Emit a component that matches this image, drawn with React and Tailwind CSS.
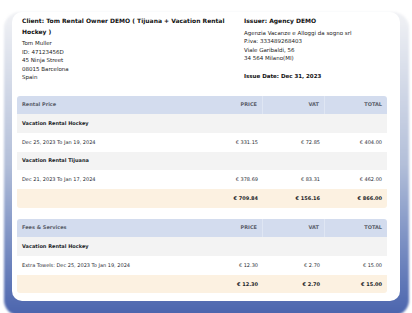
import React from 'react';

const client = ['Tom Muller', 'ID: 47123456D', '45 Ninja Street', '08015 Barcelona', 'Spain'];
const issuer = ['Agenzia Vacanze e Alloggi da sogno srl', 'P.iva: 333489268403', 'Viale Garibaldi, 56', '34 564 Milano(MI)'];

const rental = [
    { group: 'Vacation Rental Hockey', label: 'Dec 25, 2023 To Jan 19, 2024', price: '€ 331.15', vat: '€ 72.85', total: '€ 404.00' },
    { group: 'Vacation Rental Tijuana', label: 'Dec 21, 2023 To Jan 17, 2024', price: '€ 378.69', vat: '€ 83.31', total: '€ 462.00' },
];

const fees = [
    { group: 'Vacation Rental Hockey', label: 'Extra Towels: Dec 25, 2023 To Jan 19, 2024', price: '€ 12.30', vat: '€ 2.70', total: '€ 15.00' },
];

const Section = ({ title, rows, totals }) => (
    <div className="w-[370px] text-[5px] leading-none">
        <div className="grid grid-cols-[184px_62px_62px_62px] h-[18.5px] items-center bg-[#d3dcee] rounded-t-[3px] font-bold text-[#5b5f6b]">
            <div className="pl-[5px]">{title}</div>
            <div className="h-full flex items-center justify-end pr-[5px] border-r border-[#dfe6f3]">PRICE</div>
            <div className="h-full flex items-center justify-end pr-[5px] border-r border-[#dfe6f3]">VAT</div>
            <div className="h-full flex items-center justify-end pr-[5px]">TOTAL</div>
        </div>
        {rows.map((r) => (
            <React.Fragment key={r.label}>
                <div className="h-[18.8px] flex items-center pl-[5px] bg-[#f3f3f3] font-bold text-[#1c1f2a]">{r.group}</div>
                <div className="grid grid-cols-[184px_62px_62px_62px] h-[18.8px] items-center bg-white text-[#2a2d36]">
                    <div className="pl-[5px]">{r.label}</div>
                    <div className="text-right pr-[5px]">{r.price}</div>
                    <div className="text-right pr-[5px]">{r.vat}</div>
                    <div className="text-right pr-[5px]">{r.total}</div>
                </div>
            </React.Fragment>
        ))}
        <div className="grid grid-cols-[184px_62px_62px_62px] h-[18.5px] items-center bg-[#fcf1e1] rounded-b-[3px] font-bold text-[#1c1f2a]">
            <div />
            <div className="text-right pr-[5px]">{totals[0]}</div>
            <div className="text-right pr-[5px]">{totals[1]}</div>
            <div className="text-right pr-[5px]">{totals[2]}</div>
        </div>
    </div>
);

export default function App() {
    return (
        <div className="w-[412px] h-[313px] bg-white pl-[4px] pt-[4px] pr-[3px] pb-[5px] font-['DejaVu_Sans',sans-serif]">
            <div className="relative h-full">
                {/* frame */}
                <div className="absolute inset-0 rounded-[16px] bg-linear-to-b from-[#f1f2f5] via-[#b3bfd9] to-[#4b64ad] blur-[1.2px]" />
                <div className="relative h-[calc(100%-15px)] mt-[8px] ml-[8px] mr-[9px] bg-white rounded-[10px] pt-[3px]">
                    <div className="flex pl-[10px]">
                        <div className="w-[222px] pr-[4px]">
                            <div className="text-[6px] leading-[11px] font-bold text-[#111]">Client: Tom Rental Owner DEMO ( Tijuana + Vacation Rental Hockey )</div>
                            <div className="mt-[2px] text-[5.5px] leading-[8.5px] text-[#222]">
                                {client.map((l) => <div key={l}>{l}</div>)}
                            </div>
                        </div>
                        <div>
                            <div className="text-[6px] leading-[11px] font-bold text-[#111]">Issuer: Agency DEMO</div>
                            <div className="mt-[3px] text-[5.5px] leading-[8.3px] text-[#222]">
                                {issuer.map((l) => <div key={l}>{l}</div>)}
                            </div>
                            <div className="mt-[10px] text-[5.5px] leading-[8px] font-bold text-[#111]">Issue Date: Dec 31, 2023</div>
                        </div>
                    </div>
                    <div className="pl-[5px] mt-[14px] flex flex-col gap-[11px]">
                        <Section title="Rental Price" rows={rental} totals={['€ 709.84', '€ 156.16', '€ 866.00']} />
                        <Section title="Fees & Services" rows={fees} totals={['€ 12.30', '€ 2.70', '€ 15.00']} />
                    </div>
                </div>
            </div>
        </div>
    );
}
